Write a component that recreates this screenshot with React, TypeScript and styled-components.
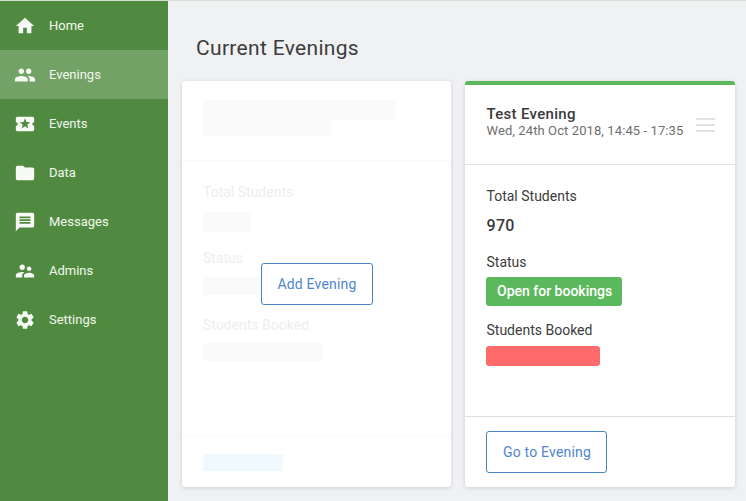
import React from "react";
import styled, { createGlobalStyle } from "styled-components";
import {
  MdHome,
  MdPeople,
  MdLocalActivity,
  MdFolder,
  MdMessage,
  MdSupervisorAccount,
  MdSettings,
} from "react-icons/md";

const navItems = [
  { label: "Home", icon: MdHome },
  { label: "Evenings", icon: MdPeople, active: true },
  { label: "Events", icon: MdLocalActivity },
  { label: "Data", icon: MdFolder },
  { label: "Messages", icon: MdMessage },
  { label: "Admins", icon: MdSupervisorAccount },
  { label: "Settings", icon: MdSettings },
];

function App() {
  return (
    <Layout>
      <CSSReset />
      <Sidebar>
        {navItems.map((item) => (
          <NavItem key={item.label} $active={item.active}>
            <item.icon size={22} />
            {item.label}
          </NavItem>
        ))}
      </Sidebar>
      <Main>
        <Title>Current Evenings</Title>
        <Cards>
          <Card>
            <CardHeader $height={79}>
              <HeaderText>
                <Ghost $width={193} $height={20} />
                <Ghost $width={129} $height={16} />
              </HeaderText>
            </CardHeader>
            <CardBody>
              <GhostLabel>Total Students</GhostLabel>
              <Ghost $width={48} $height={20} $gap={11} />
              <GhostLabel $gap={17}>Status</GhostLabel>
              <Ghost $width={136} $height={18} $gap={10} />
              <GhostLabel $gap={21}>Students Booked</GhostLabel>
              <Ghost $width={120} $height={18} $gap={9} />
            </CardBody>
            <CardFooter $faint>
              <Ghost $width={80} $height={17} $color="#f0f9fe" />
            </CardFooter>
            <AddButton>Add Evening</AddButton>
          </Card>
          <Card $accent>
            <CardHeader $height={79} $solid>
              <HeaderText>
                <EveningName>Test Evening</EveningName>
                <EveningDate>Wed, 24th Oct 2018, 14:45 - 17:35</EveningDate>
              </HeaderText>
              <MenuIcon>
                <span />
                <span />
                <span />
              </MenuIcon>
            </CardHeader>
            <CardBody>
              <Label>Total Students</Label>
              <Count>970</Count>
              <Label $gap={17}>Status</Label>
              <Badge>Open for bookings</Badge>
              <Label $gap={15}>Students Booked</Label>
              <Progress />
            </CardBody>
            <CardFooter>
              <OutlineButton>Go to Evening</OutlineButton>
            </CardFooter>
          </Card>
        </Cards>
      </Main>
    </Layout>
  );
}

const CSSReset = createGlobalStyle`
  *, *::before, *::after {
    margin: 0;
    padding: 0;
    box-sizing: border-box;
  }

  html, body, #root {
    height: 100%;
  }

  body {
    font-family: Roboto, "Liberation Sans", sans-serif;
    font-size: 14px;
    color: #3a3a3a;
    background: #eff1f3;
    overflow: hidden;
  }
`;

const Layout = styled.div`
  display: flex;
  height: 501px;
  border-top: 1px solid #d9dcd8;
`;

const Sidebar = styled.nav`
  width: 168px;
  flex-shrink: 0;
  background: #508a40;
`;

const NavItem = styled.div<{ $active?: boolean }>`
  display: flex;
  align-items: center;
  gap: 13px;
  height: 49px;
  padding-left: 14px;
  color: #f2f7ef;
  font-size: 13px;
  font-weight: 400;
  background: ${(p) => (p.$active ? "#72a265" : "transparent")};

  svg {
    flex-shrink: 0;
    width: 22px;
    height: 22px;
    fill: #f7faf5;
  }
`;

const Main = styled.main`
  flex: 1;
  min-width: 0;
  padding: 34px 11px 13px 14px;
  display: flex;
  flex-direction: column;
`;

const Title = styled.h1`
  font-size: 21px;
  font-weight: 400;
  line-height: 26px;
  letter-spacing: 0.32px;
  color: #3c3c3c;
  margin: 0 0 20px 14px;
`;

const Cards = styled.div`
  display: grid;
  grid-template-columns: 269px 270px;
  gap: 14px;
  height: 406px;
`;

const Card = styled.section<{ $accent?: boolean }>`
  position: relative;
  display: flex;
  flex-direction: column;
  background: #fff;
  border-radius: 3px;
  border-top: ${(p) => (p.$accent ? "4px solid #5cb85c" : "0")};
  box-shadow: 0 1px 4px rgba(0, 0, 0, 0.14);
`;

const CardHeader = styled.header<{ $height: number; $solid?: boolean }>`
  display: flex;
  align-items: center;
  justify-content: space-between;
  height: ${(p) => p.$height + 1}px;
  padding: 0 21px;
  border-bottom: 1px solid ${(p) => (p.$solid ? "#e4e4e4" : "#fafafa")};
`;

const HeaderText = styled.div`
  padding-bottom: 5px;
`;

const CardBody = styled.div`
  flex: 1;
  padding: 22px 21px 0;
`;

const CardFooter = styled.footer<{ $faint?: boolean }>`
  display: flex;
  align-items: center;
  height: ${(p) => (p.$faint ? "51px" : "71px")};
  padding: 0 21px;
  border-top: 1px solid ${(p) => (p.$faint ? "#fafafa" : "#dedede")};
`;

const Ghost = styled.div<{
  $width: number;
  $height: number;
  $gap?: number;
  $color?: string;
}>`
  width: ${(p) => p.$width}px;
  height: ${(p) => p.$height}px;
  margin-top: ${(p) => p.$gap || 0}px;
  background: ${(p) => p.$color || "#fafafa"};
`;

const Label = styled.div<{ $gap?: number }>`
  font-size: 14px;
  line-height: 18px;
  padding-left: 0.5px;
  color: #3c3c3c;
  margin-top: ${(p) => p.$gap || 0}px;
`;

const GhostLabel = styled(Label)`
  padding-left: 0;
  color: #eeeeee;
`;

const EveningName = styled.div`
  font-size: 15px;
  font-weight: 500;
  line-height: 18px;
  letter-spacing: 0.3px;
  padding-left: 0.5px;
  color: #3a3a3a;
`;

const EveningDate = styled.div`
  font-size: 13px;
  line-height: 16px;
  letter-spacing: 0.1px;
  padding-left: 0.5px;
  color: #6f6f6f;
`;

const MenuIcon = styled.div`
  display: flex;
  flex-direction: column;
  gap: 4px;
  width: 19px;
  margin-right: -1px;

  span {
    height: 2px;
    background: #e2e2e2;
  }
`;

const Count = styled.div`
  font-size: 16px;
  font-weight: 500;
  line-height: 20px;
  letter-spacing: 0.3px;
  padding-left: 0.5px;
  color: #3a3a3a;
  margin-top: 11px;
`;

const Badge = styled.div`
  display: inline-block;
  height: 29px;
  line-height: 29px;
  padding: 0 10px 0 11px;
  margin-top: 6px;
  background: #5cb85c;
  border-radius: 3px;
  color: #fff;
  font-size: 14px;
  font-weight: 500;
`;

const Progress = styled.div`
  width: 114px;
  height: 20px;
  margin-top: 7px;
  background: #ff6b6b;
  border-radius: 3px;
`;

const OutlineButton = styled.button`
  height: 42px;
  padding: 0 15px 0 16px;
  background: #fff;
  border: 1px solid #4a86c6;
  border-radius: 3px;
  font-family: inherit;
  font-size: 14px;
  letter-spacing: 0.2px;
  color: #4f86cf;
`;

const AddButton = styled(OutlineButton)`
  position: absolute;
  left: 79px;
  top: 182px;
  width: 112px;
  padding: 0;
`;

export default App;
